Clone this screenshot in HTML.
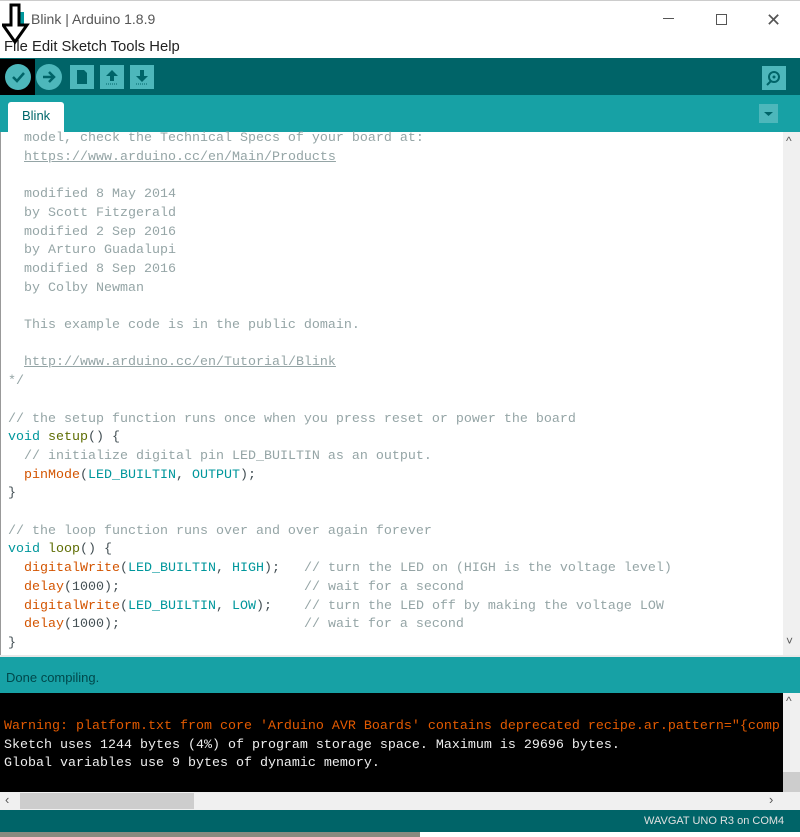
<!DOCTYPE html>
<html><head><meta charset="utf-8"><style>
*{margin:0;padding:0;box-sizing:border-box}
body{width:800px;height:837px;overflow:hidden;background:#fff;font-family:"Liberation Sans",sans-serif;position:relative}
.abs{position:absolute}
.mono{font-family:"Liberation Mono",monospace;font-size:13.33px;white-space:pre}
.c{color:#95a5a6}.k{color:#00979c}.f{color:#d35400}.o{color:#5e6d03}.t{color:#434f54}
.u{text-decoration:underline}
</style></head><body>
<div class="abs" style="left:0;top:0;width:800px;height:1px;background:#ccc"></div>
<div class="abs" style="left:10px;top:12px;width:14px;height:14px;background:#00979c"></div>
<div class="abs" style="left:31px;top:11px;font-size:14px;color:#555">Blink | Arduino 1.8.9</div>
<div class="abs" style="left:663px;top:18px;width:11px;height:1px;background:#555"></div>
<div class="abs" style="left:716px;top:14px;width:11px;height:11px;border:1px solid #555"></div>
<div class="abs" style="left:766px;top:10px;font-size:18px;color:#555">✕</div>
<div class="abs" style="left:4px;top:39px;font-size:14.8px;color:#222">File Edit Sketch Tools Help</div>
<svg class="abs" style="left:2px;top:2px" width="30" height="46"><path d="M9 3h8v20h8L13 40 1 23h8z" fill="#fff" stroke="#000" stroke-width="3"/></svg>
<div class="abs" style="left:0;top:58px;width:800px;height:37px;background:#006468"></div>
<div class="abs" style="left:0;top:59px;width:35px;height:36px;background:#000"></div>
<div class="abs" style="left:5px;top:64px;width:26px;height:26px;border-radius:50%;background:#4db7bb"></div>
<svg class="abs" style="left:5px;top:64px" width="26" height="26"><path d="M8 13l4 4 7-8" stroke="#006468" stroke-width="2.5" fill="none"/></svg>
<div class="abs" style="left:36px;top:64px;width:26px;height:26px;border-radius:50%;background:#4db7bb"></div>
<svg class="abs" style="left:36px;top:64px" width="26" height="26"><path d="M7 13h10M13 8l5 5-5 5" stroke="#006468" stroke-width="2.5" fill="none"/></svg>
<div class="abs" style="left:70px;top:65px;width:24px;height:24px;background:#4db7bb"></div>
<svg class="abs" style="left:70px;top:65px" width="24" height="24"><path d="M7 5h7l3 3v11H7z" fill="#006468"/></svg>
<div class="abs" style="left:100px;top:65px;width:24px;height:24px;background:#4db7bb"></div>
<svg class="abs" style="left:100px;top:65px" width="24" height="24"><path d="M12 5l6 6h-4v5h-4v-5H6z" fill="#006468"/><path d="M6 19h12" stroke="#006468" stroke-dasharray="1 1"/></svg>
<div class="abs" style="left:130px;top:65px;width:24px;height:24px;background:#4db7bb"></div>
<svg class="abs" style="left:130px;top:65px" width="24" height="24"><path d="M12 17l6-6h-4V5h-4v6H6z" fill="#006468"/><path d="M6 19h12" stroke="#006468" stroke-dasharray="1 1"/></svg>
<div class="abs" style="left:762px;top:66px;width:24px;height:24px;background:#4db7bb"></div>
<svg class="abs" style="left:762px;top:66px" width="24" height="24"><circle cx="12" cy="11" r="5" fill="none" stroke="#006468" stroke-width="2"/><circle cx="12" cy="11" r="1.5" fill="#006468"/><path d="M9 15l-4 4" stroke="#006468" stroke-width="2"/></svg>
<div class="abs" style="left:0;top:95px;width:800px;height:37px;background:#17a1a5"></div>
<div class="abs" style="left:8px;top:102px;width:56px;height:30px;background:#fff;border-radius:3px 3px 0 0"></div>
<div class="abs" style="left:22px;top:108px;font-size:13px;color:#00676b">Blink</div>
<div class="abs" style="left:759px;top:104px;width:19px;height:19px;background:#4db7bb"></div>
<svg class="abs" style="left:759px;top:104px" width="19" height="19"><path d="M5 8h9l-4.5 4z" fill="#006468"/></svg>
<div class="abs" style="left:0;top:132px;width:1px;height:525px;background:#999"></div>
<div class="abs mono t" style="left:8px;top:130px;line-height:18.7px"><span class="c">  model, check the Technical Specs of your board at:
  <span class="u">https://www.arduino.cc/en/Main/Products</span>

  modified 8 May 2014
  by Scott Fitzgerald
  modified 2 Sep 2016
  by Arturo Guadalupi
  modified 8 Sep 2016
  by Colby Newman

  This example code is in the public domain.

  <span class="u">http://www.arduino.cc/en/Tutorial/Blink</span>
*/</span>

<span class="c">// the setup function runs once when you press reset or power the board</span>
<span class="k">void</span> <span class="o">setup</span>() {
  <span class="c">// initialize digital pin LED_BUILTIN as an output.</span>
  <span class="f">pinMode</span>(<span class="k">LED_BUILTIN</span>, <span class="k">OUTPUT</span>);
}

<span class="c">// the loop function runs over and over again forever</span>
<span class="k">void</span> <span class="o">loop</span>() {
  <span class="f">digitalWrite</span>(<span class="k">LED_BUILTIN</span>, <span class="k">HIGH</span>);   <span class="c">// turn the LED on (HIGH is the voltage level)</span>
  <span class="f">delay</span>(1000);                       <span class="c">// wait for a second</span>
  <span class="f">digitalWrite</span>(<span class="k">LED_BUILTIN</span>, <span class="k">LOW</span>);    <span class="c">// turn the LED off by making the voltage LOW</span>
  <span class="f">delay</span>(1000);                       <span class="c">// wait for a second</span>
}</div>
<div class="abs" style="left:783px;top:132px;width:17px;height:523px;background:#f0f0f0"></div>
<div class="abs" style="left:786px;top:134px;font-size:12px;color:#555">^</div>
<div class="abs" style="left:786px;top:634px;font-size:12px;color:#555">˅</div>
<div class="abs" style="left:0;top:655px;width:800px;height:2px;background:#e8e8e8"></div>
<div class="abs" style="left:0;top:657px;width:800px;height:36px;background:#17a1a5"></div>
<div class="abs" style="left:6px;top:670px;font-size:13px;color:#00484b">Done compiling.</div>
<div class="abs" style="left:0;top:693px;width:783px;height:99px;background:#000"></div>
<div class="abs mono" style="left:4px;top:718px;line-height:18.7px;color:#eee;width:779px;overflow:hidden"><span style="color:#e35a00">Warning: platform.txt from core 'Arduino AVR Boards' contains deprecated recipe.ar.pattern="{comp</span>
Sketch uses 1244 bytes (4%) of program storage space. Maximum is 29696 bytes.
Global variables use 9 bytes of dynamic memory.</div>
<div class="abs" style="left:783px;top:693px;width:17px;height:99px;background:#f0f0f0"></div>
<div class="abs" style="left:783px;top:772px;width:17px;height:20px;background:#cdcdcd"></div>
<div class="abs" style="left:786px;top:694px;font-size:12px;color:#555">^</div>
<div class="abs" style="left:0;top:792px;width:800px;height:18px;background:#f0f0f0"></div>
<div class="abs" style="left:20px;top:793px;width:174px;height:16px;background:#cdcdcd"></div>
<div class="abs" style="left:5px;top:792px;font-size:13px;color:#555">‹</div>
<div class="abs" style="left:769px;top:792px;font-size:13px;color:#555">›</div>
<div class="abs" style="left:0;top:810px;width:800px;height:22px;background:#006468"></div>
<div class="abs" style="left:644px;top:815px;font-size:11px;color:#e0e0e0">WAVGAT UNO R3 on COM4</div>
<div class="abs" style="left:0;top:832px;width:420px;height:5px;background:#8a8a80"></div>
</body></html>
